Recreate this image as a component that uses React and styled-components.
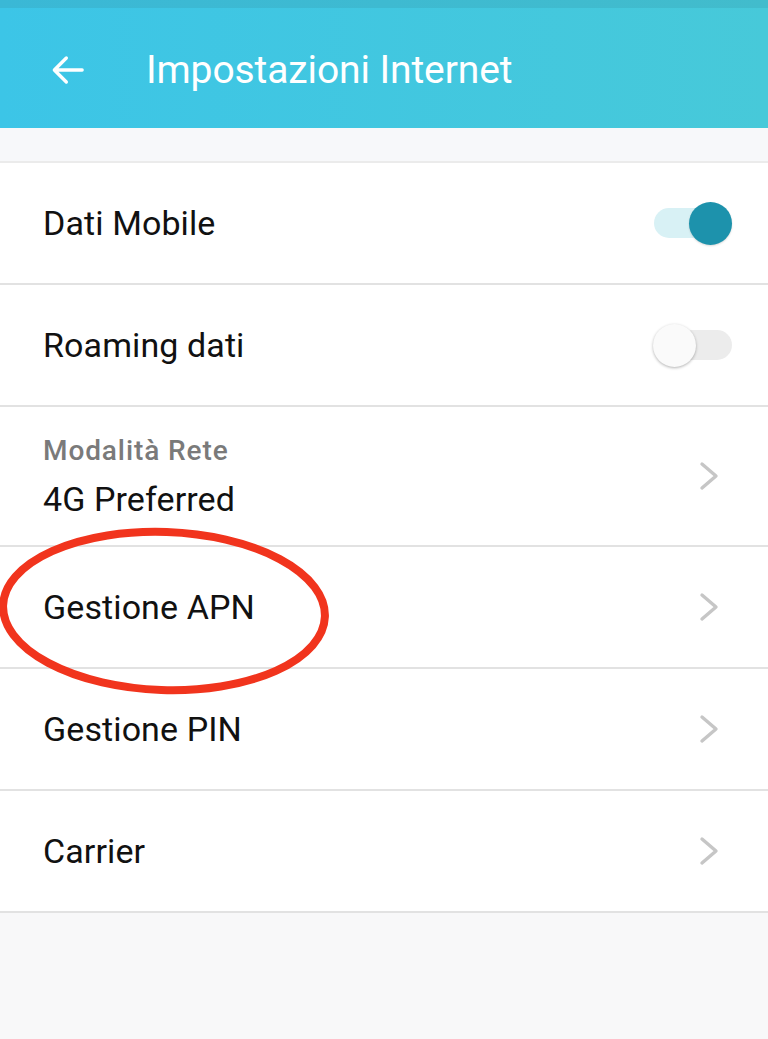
import React from "react";
import styled, { createGlobalStyle } from "styled-components";

const Global = createGlobalStyle`
  html, body { margin: 0; padding: 0; background: #f8f8f9; }
  body { font-family: Roboto, "Noto Sans", sans-serif; }
  #root { min-height: 1039px; }
`;

const Page = styled.div`
  width: 768px;
  min-height: 1039px;
  background: #f8f8f9;
  position: relative;
  overflow: hidden;
`;

const StatusEdge = styled.div`
  height: 8px;
  background: linear-gradient(90deg, #3ab8d6 0%, #42bccc 100%);
`;

const Header = styled.header`
  height: 120px;
  display: flex;
  align-items: center;
  padding-left: 48px;
  gap: 58px;
  background: linear-gradient(90deg, #3cc5e7 0%, #47c9d9 100%);
  color: #fff;
  box-sizing: border-box;
  padding-top: 4px;
`;

const Title = styled.h1`
  margin: 0;
  font-family: Roboto, sans-serif;
  font-weight: 400;
  font-size: 39px;
  letter-spacing: -0.1px;
`;

const Spacer = styled.div`
  height: 33px;
  background: #f7f8fa;
`;

const List = styled.div`
  background: #fff;
  border-top: 2px solid #ebebeb;
  position: relative;
`;

const Row = styled.div`
  height: ${(p) => (p.$tall ? 138 : 120)}px;
  border-bottom: 2px solid #e2e2e2;
  display: flex;
  align-items: center;
  justify-content: space-between;
  padding: 0 36px 0 43px;
  position: relative;
`;

const Texts = styled.div`
  display: flex;
  flex-direction: column;
  gap: ${(p) => (p.$gap ? 12 : 0)}px;
  padding-top: 2px;
`;

const Label = styled.span`
  font-size: 34px;
  line-height: 40px;
  color: #111;
  letter-spacing: 0.1px;
`;

const Sub = styled.span`
  font-size: 28px;
  line-height: 32px;
  font-weight: 500;
  color: #7a7a7a;
  letter-spacing: 0.9px;
`;

const Switch = styled.div`
  width: 78px;
  height: 44px;
  position: relative;
  display: flex;
  align-items: center;
`;

const Track = styled.div`
  width: 78px;
  height: 30px;
  border-radius: 15px;
  background: ${(p) => (p.$on ? "#d8f1f5" : "#ececec")};
`;

const Thumb = styled.div`
  position: absolute;
  top: 1px;
  left: ${(p) => (p.$on ? 35 : -1)}px;
  width: 43px;
  height: 43px;
  border-radius: 50%;
  background: ${(p) => (p.$on ? "#1d92ac" : "#fafafa")};
  box-shadow: ${(p) =>
    p.$on ? "0 1px 2px rgba(0,0,0,0.15)" : "0 1px 3px rgba(0,0,0,0.3)"};
`;

const Chevron = styled.svg`
  width: 20px;
  height: 30px;
  margin-right: 13px;
`;

const Highlight = styled.svg`
  position: absolute;
  left: -8px;
  top: -24px;
  width: 348px;
  height: 176px;
  pointer-events: none;
`;

const Arrow = () => (
  <svg width="40" height="40" viewBox="0 0 24 24" fill="none" stroke="#fff" strokeWidth="2" strokeLinecap="round" strokeLinejoin="round">
    <path d="M20.5 12H4M11 4.8L3.8 12l7.2 7.2" />
  </svg>
);

const Chev = () => (
  <Chevron viewBox="0 0 20 30" fill="none" stroke="#c6c6c6" strokeWidth="3.4" strokeLinecap="round" strokeLinejoin="round">
    <path d="M3 3l14 12L3 27" />
  </Chevron>
);

const Toggle = ({ on }) => (
  <Switch>
    <Track $on={on} />
    <Thumb $on={on} />
  </Switch>
);

export default function App() {
  return (
    <>
      <Global />
      <Page>
        <StatusEdge />
        <Header>
          <Arrow />
          <Title>Impostazioni Internet</Title>
        </Header>
        <Spacer />
        <List>
          <Row>
            <Label>Dati Mobile</Label>
            <Toggle on />
          </Row>
          <Row>
            <Label>Roaming dati</Label>
            <Toggle />
          </Row>
          <Row $tall>
            <Texts $gap>
              <Sub>Modalità Rete</Sub>
              <Label>4G Preferred</Label>
            </Texts>
            <Chev />
          </Row>
          <Row>
            <Label>Gestione APN</Label>
            <Chev />
            <Highlight viewBox="0 0 348 176">
              <ellipse cx="172" cy="88" rx="161" ry="79" fill="none" stroke="#f1341d" strokeWidth="8" transform="rotate(2 172 88)" />
            </Highlight>
          </Row>
          <Row>
            <Label>Gestione PIN</Label>
            <Chev />
          </Row>
          <Row>
            <Label>Carrier</Label>
            <Chev />
          </Row>
        </List>
      </Page>
    </>
  );
}
